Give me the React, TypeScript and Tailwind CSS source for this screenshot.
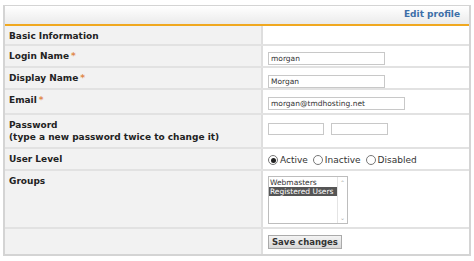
import React from 'react';

const font = { fontFamily: '"DejaVu Sans", Verdana, sans-serif' };

const Req = () => <span className="text-[#e0894a] ml-[2px]">*</span>;

const Row: React.FC<{ label: React.ReactNode; h: string; children?: React.ReactNode; last?: boolean }> = ({ label, h, children, last }) => (
  <div className={`flex ${h} ${last ? '' : 'border-b-2 border-[#e2e2e2]'}`}>
    <div className="w-[258px] shrink-0 bg-[#f2f2f2] border-r-2 border-[#dedede] pl-[4px] pt-[4px] font-bold text-[9px] leading-[12px] text-[#222]">
      {label}
    </div>
    <div className="flex-1 bg-white pl-[5px] pt-[5px] leading-none">{children}</div>
  </div>
);

const Input: React.FC<{ w: string; value?: string }> = ({ w, value }) => (
  <div className={`${w} h-[13px] border border-[#c8c8c8] bg-white text-[7.5px] leading-[11px] pl-[2px] text-[#333]`}>{value}</div>
);

const Radio: React.FC<{ checked?: boolean; label: string }> = ({ checked, label }) => (
  <span className="flex items-center gap-[2px] mr-[5px]">
    <span className="w-[10px] h-[10px] rounded-full border border-[#777] bg-white flex items-center justify-center">
      {checked && <span className="w-[5px] h-[5px] rounded-full bg-[#222]" />}
    </span>
    <span className="text-[9px] text-[#333]">{label}</span>
  </span>
);

export default function App() {
  return (
    <div className="w-[474px] h-[261px] bg-white pt-[5px] px-[3px]" style={font}>
      <div className="border-l-2 border-r-2 border-b-2 border-t border-[#d4d4d4]">
        <div className="h-[18px] bg-gradient-to-b from-[#ffffff] to-[#ebebeb] flex items-center justify-end pr-[9px]">
          <span className="text-[9px] font-bold text-[#3d6fa8]">Edit profile</span>
        </div>
        <div className="h-[2px] bg-[#f0a820]" />
        <Row label="Basic Information" h="h-[20px]" />
        <Row label={<>Login Name<Req /></>} h="h-[22px]">
          <div className="flex pt-[1px]"><Input w="w-[117px]" value="morgan" /></div>
        </Row>
        <Row label={<>Display Name<Req /></>} h="h-[22px]">
          <div className="flex pt-[2px]"><Input w="w-[117px]" value="Morgan" /></div>
        </Row>
        <Row label={<>Email<Req /></>} h="h-[25px]">
          <div className="flex pt-[2px]"><Input w="w-[137px]" value="morgan@tmdhosting.net" /></div>
        </Row>
        <Row label={<>Password<br />(type a new password twice to change it)</>} h="h-[34px]">
          <div className="flex gap-[7px] pt-[3px]">
            <div className="w-[56px] h-[12px] border border-[#c8c8c8]" />
            <div className="w-[57px] h-[12px] border border-[#c8c8c8]" />
          </div>
        </Row>
        <Row label="User Level" h="h-[22px]">
          <div className="flex items-center pt-[1px]">
            <Radio checked label="Active" />
            <Radio label="Inactive" />
            <Radio label="Disabled" />
          </div>
        </Row>
        <Row label="Groups" h="h-[58px]">
          <div className="w-[80px] h-[48px] border border-[#bdbdbd] flex text-[7.5px] leading-[9px] text-[#333]">
            <div className="flex-1 pt-[1px]">
              <div className="pl-[1px]">Webmasters</div>
              <div className="bg-[#555] text-white pl-[1px]">Registered Users</div>
            </div>
            <div className="w-[10px] border-l border-[#e4e4e4] flex flex-col justify-between items-center text-[6px] text-[#aaa] py-[1px]">
              <span>⌃</span>
              <span>⌄</span>
            </div>
          </div>
        </Row>
        <Row label="" h="h-[25px]" last>
          <div className="flex pt-[1px]">
            <button className="h-[14px] px-[3px] border border-[#aaa] bg-gradient-to-b from-[#f4f4f4] to-[#d8d8d8] text-[8.5px] font-bold text-[#333] leading-[12px]">
              Save changes
            </button>
          </div>
        </Row>
      </div>
    </div>
  );
}
